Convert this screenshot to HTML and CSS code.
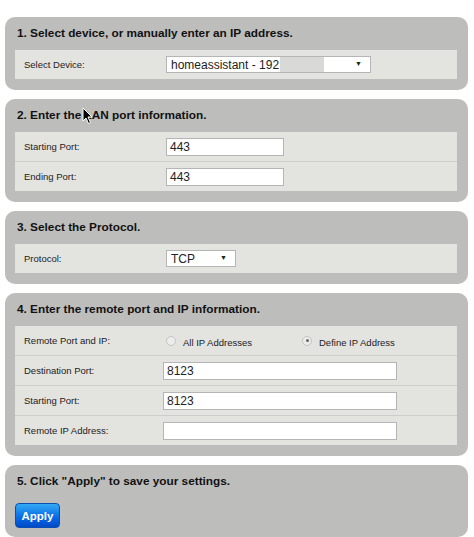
FILE: index.html
```html
<!DOCTYPE html>
<html>
<head>
<meta charset="utf-8">
<link rel="stylesheet" href="styles.css">
</head>
<body>
<div class="page">
  <section class="panel">
    <h2 class="title">1. Select device, or manually enter an IP address.</h2>
    <div class="rows">
      <div class="row">
        <span class="label">Select Device:</span>
        <div class="select sel-device">
          <span class="sel-text">homeassistant - 192</span>
          <span class="redact"></span>
          <span class="arrow">&#9660;</span>
        </div>
      </div>
    </div>
  </section>

  <section class="panel panel-cursor">
    <h2 class="title">2. Enter the LAN port information.</h2>
    <svg class="cursor" width="12" height="18" viewBox="0 0 12 18">
      <path d="M1 1 L1 14 L4 11 L6.5 16.5 L8.5 15.5 L6 10 L10 10 Z" fill="#000" stroke="#fff" stroke-width="1" stroke-linejoin="round"/>
    </svg>
    <div class="rows">
      <div class="row">
        <span class="label">Starting Port:</span>
        <div class="input short">443</div>
      </div>
      <div class="row">
        <span class="label">Ending Port:</span>
        <div class="input short">443</div>
      </div>
    </div>
  </section>

  <section class="panel">
    <h2 class="title">3. Select the Protocol.</h2>
    <div class="rows">
      <div class="row">
        <span class="label">Protocol:</span>
        <div class="select sel-proto">
          <span class="sel-text">TCP</span>
          <span class="arrow">&#9660;</span>
        </div>
      </div>
    </div>
  </section>

  <section class="panel">
    <h2 class="title">4. Enter the remote port and IP information.</h2>
    <div class="rows rows-wide">
      <div class="row">
        <span class="label">Remote Port and IP:</span>
        <div class="radios">
          <span class="radio-opt opt-all"><span class="radio"></span>All IP Addresses</span>
          <span class="radio-opt"><span class="radio checked"></span>Define IP Address</span>
        </div>
      </div>
      <div class="row">
        <span class="label">Destination Port:</span>
        <div class="input long">8123</div>
      </div>
      <div class="row">
        <span class="label">Starting Port:</span>
        <div class="input long">8123</div>
      </div>
      <div class="row">
        <span class="label">Remote IP Address:</span>
        <div class="input long"></div>
      </div>
    </div>
  </section>

  <section class="panel panel-last">
    <h2 class="title">5. Click "Apply" to save your settings.</h2>
    <button class="apply">Apply</button>
  </section>
</div>
</body>
</html>
```

FILE: styles.css
```css
html, body {
  margin: 0;
  padding: 0;
  background: #ffffff;
}

body {
  font-family: "Liberation Sans", Arial, sans-serif;
  color: #1a1a1a;
}

.page {
  width: 463px;
  padding: 17px 0 0 5px;
  display: flex;
  flex-direction: column;
  gap: 9px;
}

.panel {
  background: #bdbdbc;
  border-radius: 10px;
  padding: 7px 11px 11px 10px;
}

.panel-cursor {
  position: relative;
}

.cursor {
  position: absolute;
  left: 77px;
  top: 8px;
}

.title {
  margin: 0 0 8px 2px;
  font-size: 11.8px;
  line-height: 18px;
  font-weight: bold;
  color: #111;
}

.rows {
  display: flex;
  flex-direction: column;
  background: #e3e3e0;
}

.row {
  display: flex;
  align-items: center;
  min-height: 29px;
  padding-left: 9px;
}

.row + .row {
  border-top: 1px solid #cdcdcb;
}

.label {
  width: 142px;
  flex: none;
  font-size: 9.5px;
  color: #222;
}

.rows-wide .label {
  width: 139px;
}

.select {
  position: relative;
  display: flex;
  align-items: center;
  height: 15px;
  background: #fff;
  border: 1px solid #b5b5b5;
  font-size: 12px;
  color: #222;
  padding-left: 4px;
}

.sel-device {
  width: 199px;
}

.sel-proto {
  width: 64px;
}

.sel-text {
  flex: none;
}

.redact {
  flex: none;
  width: 44px;
  height: 15px;
  margin-left: 1px;
  background: #d9d9d8;
}

.arrow {
  position: absolute;
  right: 8px;
  top: 3px;
  font-size: 7px;
  color: #222;
}

.input {
  height: 16px;
  line-height: 16px;
  background: #fff;
  border: 1px solid #b5b5b5;
  font-size: 12px;
  color: #222;
  padding-left: 3px;
  box-sizing: content-box;
}

.input.short {
  width: 113px;
}

.input.long {
  width: 229px;
}

.radios {
  display: flex;
  align-items: center;
  font-size: 9.5px;
  color: #222;
  padding-top: 3px;
}

.radio-opt {
  display: flex;
  align-items: center;
}

.opt-all {
  width: 136px;
  margin-left: 3px;
}

.radio {
  width: 8px;
  height: 8px;
  border-radius: 50%;
  border: 1px solid #c4c4c4;
  background: #ececec;
  margin-right: 7px;
  margin-top: -3px;
  position: relative;
}

.radio.checked::after {
  content: "";
  position: absolute;
  left: 2.5px;
  top: 2.5px;
  width: 3px;
  height: 3px;
  border-radius: 50%;
  background: #666;
}

.panel-last {
  padding-bottom: 9px;
}

.panel-last .title {
  margin-bottom: 13px;
}

.apply {
  display: block;
  width: 45px;
  height: 25px;
  border: 1px solid #0a4fb0;
  border-radius: 4px;
  background: linear-gradient(#33aaf5, #0a6ee6 55%, #0048c8);
  color: #fff;
  font-family: "Liberation Sans", Arial, sans-serif;
  font-weight: bold;
  font-size: 11.5px;
  padding: 0;
}
```
